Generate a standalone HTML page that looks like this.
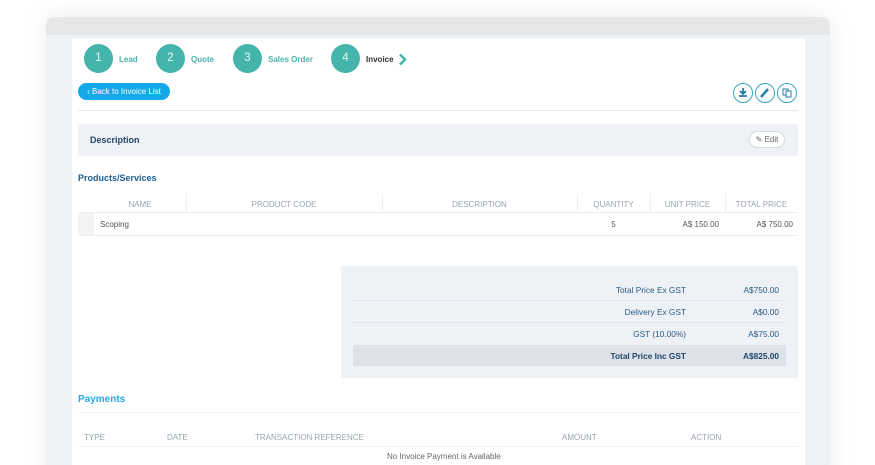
<!DOCTYPE html>
<html><head><meta charset="utf-8"><style>
*{margin:0;padding:0;box-sizing:border-box}
html,body{width:875px;height:465px;overflow:hidden}
body{background:#fff;font-family:"Liberation Sans",sans-serif;position:relative}
.a{position:absolute}
.frame{left:46px;top:17px;width:784px;height:460px;background:#eef2f6;border-radius:8px 8px 0 0;box-shadow:0 0 25px rgba(0,0,0,.08);overflow:hidden}
.bar{left:0;top:0;width:784px;height:18px;background:#e6e7e9}
.content{left:72px;top:38px;width:733px;height:430px;background:#fff}
.circ{width:29px;height:29px;border-radius:50%;background:#45b5ab;color:#e8f7f5;font-size:11.5px;text-align:center;line-height:29px;top:44px}
.st{top:55px;font-size:8px;font-weight:bold;color:#45b5ab}
.th{font-size:8px;color:#9aa3ad;top:200px;text-align:center}
.ib{width:20px;height:20px;border:1.3px solid #3aa6c4;border-radius:50%;top:83px;background:#fff}
.r{font-size:8.3px;color:#2b5a80;text-align:right}
.td{font-size:8px;color:#555}
</style></head><body>
<div class="a frame"><div class="a bar"></div></div>
<div class="a content"></div>
<div class="a circ" style="left:84px">1</div><div class="a st" style="left:119px">Lead</div>
<div class="a circ" style="left:156px">2</div><div class="a st" style="left:191px">Quote</div>
<div class="a circ" style="left:233px">3</div><div class="a st" style="left:268px">Sales Order</div>
<div class="a circ" style="left:331px">4</div><div class="a st" style="left:366px;color:#333">Invoice</div>
<svg class="a" style="left:398px;top:53px" width="10" height="13"><path d="M2 1.5L7 6.5L2 11.5" stroke="#45b5ab" stroke-width="2.6" fill="none"/></svg>
<div class="a" style="left:78px;top:83px;width:92px;height:17px;border-radius:9px;background:#13a8e8;color:#fff;font-size:8px;line-height:17px;text-align:center">‹ Back to Invoice List</div>
<div class="a ib" style="left:733px"><svg width="18" height="18"><path d="M9 4v6M6 7l3 3 3-3M5 12h8" stroke="#1f7fa8" stroke-width="1.8" fill="none"/></svg></div>
<div class="a ib" style="left:755px"><svg width="18" height="18"><path d="M5 13l7-8" stroke="#1f7fa8" stroke-width="2.5"/></svg></div>
<div class="a ib" style="left:777px"><svg width="18" height="18"><rect x="5" y="5" width="5" height="6" fill="none" stroke="#1f7fa8"/><rect x="8" y="7" width="5" height="6" fill="#fff" stroke="#1f7fa8"/></svg></div>
<div class="a" style="left:78px;top:110px;width:720px;height:1px;background:#e6e9ed"></div>
<div class="a" style="left:78px;top:124px;width:720px;height:32px;background:#eef2f7"></div>
<div class="a" style="left:90px;top:135px;font-size:9px;font-weight:bold;color:#25466a">Description</div>
<div class="a" style="left:749px;top:131px;width:36px;height:17px;border:1px solid #d6dbe0;border-radius:9px;background:#fff;font-size:8px;color:#666;line-height:15px;text-align:center">✎ Edit</div>
<div class="a" style="left:78px;top:173px;font-size:9px;font-weight:bold;color:#1e5d91">Products/Services</div>
<div class="a" style="left:78px;top:212px;width:720px;height:1px;background:#eceef1"></div>
<div class="a" style="left:78px;top:235px;width:720px;height:1px;background:#eceef1"></div>
<div class="a" style="left:78px;top:213px;width:16px;height:22px;background:#f3f4f6"></div>
<div class="a" style="left:186px;top:194px;width:1px;height:18px;background:#eceef1"></div>
<div class="a" style="left:382px;top:194px;width:1px;height:18px;background:#eceef1"></div>
<div class="a" style="left:577px;top:194px;width:1px;height:18px;background:#eceef1"></div>
<div class="a" style="left:650px;top:194px;width:1px;height:18px;background:#eceef1"></div>
<div class="a" style="left:725px;top:194px;width:1px;height:18px;background:#eceef1"></div>
<div class="a th" style="left:94px;width:92px">NAME</div>
<div class="a th" style="left:186px;width:196px">PRODUCT CODE</div>
<div class="a th" style="left:382px;width:195px">DESCRIPTION</div>
<div class="a th" style="left:577px;width:73px">QUANTITY</div>
<div class="a th" style="left:650px;width:75px">UNIT PRICE</div>
<div class="a th" style="left:725px;width:73px">TOTAL PRICE</div>
<div class="a td" style="left:100px;top:220px">Scoping</div>
<div class="a td" style="left:577px;width:73px;top:220px;text-align:center">5</div>
<div class="a td" style="left:640px;width:79px;top:220px;text-align:right">A$ 150.00</div>
<div class="a td" style="left:715px;width:78px;top:220px;text-align:right">A$ 750.00</div>
<div class="a" style="left:341px;top:266px;width:457px;height:112px;background:#eef2f7;border-radius:2px"></div>
<div class="a" style="left:353px;top:300px;width:433px;height:1px;background:#dde3ea"></div>
<div class="a" style="left:353px;top:322px;width:433px;height:1px;background:#dde3ea"></div>
<div class="a" style="left:353px;top:345px;width:433px;height:21px;background:#dde2e9"></div>
<div class="a r" style="left:500px;width:186px;top:285px">Total Price Ex GST</div><div class="a r" style="left:700px;width:79px;top:285px">A$750.00</div>
<div class="a r" style="left:500px;width:186px;top:307px">Delivery Ex GST</div><div class="a r" style="left:700px;width:79px;top:307px">A$0.00</div>
<div class="a r" style="left:500px;width:186px;top:329px">GST (10.00%)</div><div class="a r" style="left:700px;width:79px;top:329px">A$75.00</div>
<div class="a r" style="left:500px;width:186px;top:351px;font-weight:bold;color:#1f4468">Total Price Inc GST</div><div class="a r" style="left:700px;width:79px;top:351px;font-weight:bold;color:#1f4468">A$825.00</div>
<div class="a" style="left:78px;top:394px;font-size:10px;font-weight:bold;color:#27a8e8">Payments</div>
<div class="a" style="left:78px;top:412px;width:720px;height:1px;background:#eef0f3"></div>
<div class="a" style="left:78px;top:446px;width:720px;height:1px;background:#eef0f3"></div>
<div class="a" style="left:84px;top:433px;font-size:8px;color:#9aa3ad">TYPE</div>
<div class="a" style="left:167px;top:433px;font-size:8px;color:#9aa3ad">DATE</div>
<div class="a" style="left:255px;top:433px;font-size:8px;color:#9aa3ad">TRANSACTION REFERENCE</div>
<div class="a" style="left:562px;top:433px;font-size:8px;color:#9aa3ad">AMOUNT</div>
<div class="a" style="left:691px;top:433px;font-size:8px;color:#9aa3ad">ACTION</div>
<div class="a" style="left:387px;top:452px;font-size:8px;color:#666">No Invoice Payment is Available</div>
</body></html>
